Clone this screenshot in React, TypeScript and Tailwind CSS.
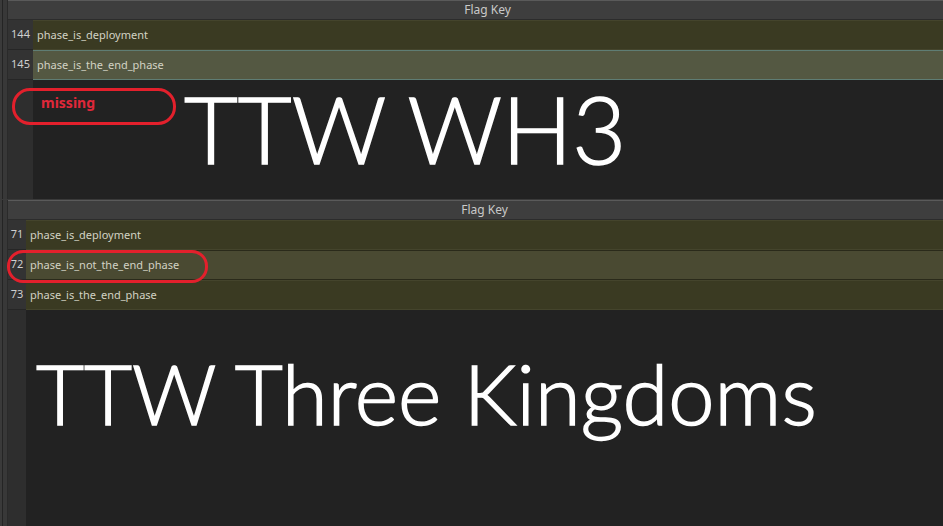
import React from "react";

const font = { fontFamily: '"Noto Sans", "Open Sans", sans-serif' };
const bigFont = { fontFamily: 'Lato, "Noto Sans", sans-serif' };

function LeftStrip() {
  return (
    <div className="w-[8px] flex shrink-0">
      <div className="w-[2px] bg-[#3a3a3a]" />
      <div className="w-[1px] bg-[#242424]" />
      <div className="w-[4px] bg-[#383838]" />
      <div className="w-[1px] bg-[#2a2a2a]" />
    </div>
  );
}

type Row = { n: string; label: string; sel?: boolean };

function Panel({
  rows,
  numW,
  className,
  selStyle,
  headPad,
}: {
  rows: Row[];
  numW: string;
  className: string;
  selStyle: string;
  headPad: string;
}) {
  return (
    <div className={"flex " + className}>
      <LeftStrip />
      <div className="flex-1 flex flex-col">
        <div
          className={
            "h-[20px] shrink-0 border-t border-[#5a5a5a] bg-[#3e3e3e] border-b border-b-[#2c2c2c] flex items-center justify-center text-[12px] text-[#c9c9c9] " +
            headPad
          }
        >
          Flag Key
        </div>
        {rows.map((r) => (
          <div key={r.n} className="h-[30px] flex shrink-0">
            <div
              className={
                numW +
                " shrink-0 bg-[#333333] border-b border-[#262626] flex items-center justify-center text-[11px] text-[#cfcfcf]"
              }
            >
              {r.n}
            </div>
            <div
              className={
                "flex-1 flex items-center pl-[4px] text-[11px] text-[#d2d2c4] " +
                (r.sel ? selStyle : "bg-[#3a3a22] border-t border-[#44442c] border-b border-[#2a2a1a]")
              }
            >
              {r.label}
            </div>
          </div>
        ))}
        <div className="flex-1 flex">
          <div className={numW + " shrink-0 bg-[#2e2e2e]"} />
          <div className="flex-1 bg-[#222222]" />
        </div>
      </div>
    </div>
  );
}

export default function App() {
  return (
    <div className="w-[943px] h-[526px] relative overflow-hidden bg-[#222222] flex flex-col" style={font}>
      <Panel
        className="h-[200px] shrink-0 border-b border-[#3a3a3a]"
        numW="w-[25px]"
        headPad="pl-[24px]"
        selStyle="bg-[#545842] border-t border-[#5e624c] border-b border-[#5f7d74]"
        rows={[
          { n: "144", label: "phase_is_deployment" },
          { n: "145", label: "phase_is_the_end_phase", sel: true },
        ]}
      />
      <Panel
        className="flex-1"
        numW="w-[18px]"
        headPad="pl-[18px]"
        selStyle="bg-[#4a4a32] border-t border-[#2a2a1a] border-b border-[#2a2a1a]"
        rows={[
          { n: "71", label: "phase_is_deployment" },
          { n: "72", label: "phase_is_not_the_end_phase", sel: true },
          { n: "73", label: "phase_is_the_end_phase" },
        ]}
      />

      {/* annotations */}
      <div className="absolute left-[12px] top-[88px] w-[164px] h-[37px] rounded-[18px] border-[3px] border-[#e3202c]" />
      <div className="absolute left-[41px] top-[92px] text-[14px] font-bold text-[#e0283a]">missing</div>
      <div
        className="absolute left-[184px] top-[82px] text-[93px] font-light leading-none text-white whitespace-nowrap [-webkit-text-stroke:1.5px_white]"
        style={bigFont}
      >
        TTW WH3
      </div>
      <div className="absolute left-[7px] top-[250px] w-[201px] h-[33px] rounded-[16px] border-[3px] border-[#e3202c]" />
      <div
        className="absolute left-[36px] top-[352px] text-[83px] font-light leading-none text-white whitespace-nowrap [-webkit-text-stroke:1.5px_white]"
        style={bigFont}
      >
        TTW Three Kingdoms
      </div>
    </div>
  );
}
